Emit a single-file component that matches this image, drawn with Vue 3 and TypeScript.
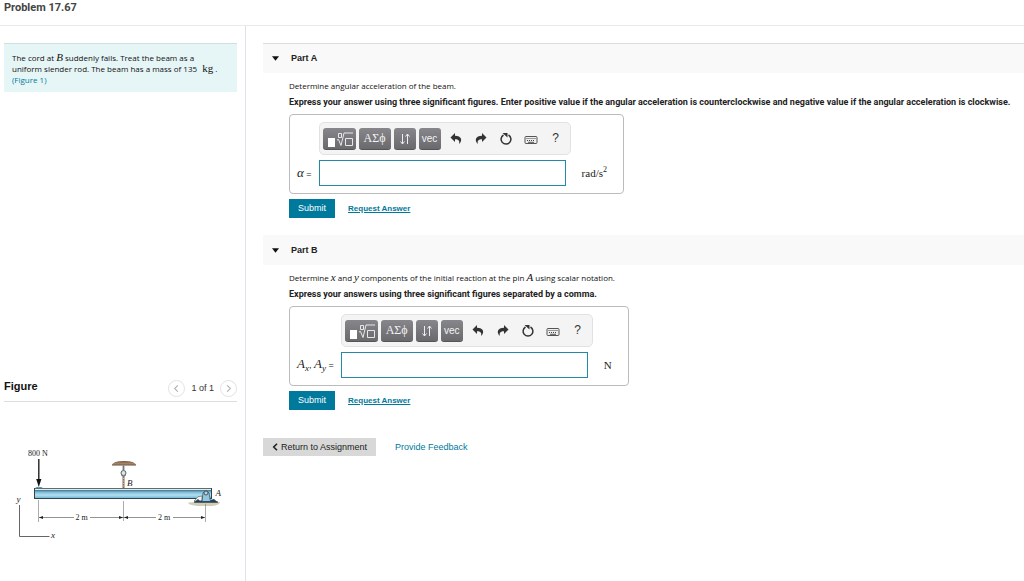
<script setup lang="ts">
import { reactive } from 'vue'

interface Segment { text: string; math?: boolean }
interface Symbol { name: string; sub?: string; after?: string }
interface Part {
  id: string
  title: string
  prompt: Segment[]
  instruction: string
  symbols: Symbol[]
  unit: string
  power?: string
  answer: string
  open: boolean
}

const parts = reactive<Part[]>([
  {
    id: 'a',
    title: 'Part A',
    prompt: [{ text: 'Determine angular acceleration of the beam.' }],
    instruction:
      'Express your answer using three significant figures. Enter positive value if the angular acceleration is counterclockwise and negative value if the angular acceleration is clockwise.',
    symbols: [{ name: 'α' }],
    unit: 'rad/s',
    power: '2',
    answer: '',
    open: true,
  },
  {
    id: 'b',
    title: 'Part B',
    prompt: [
      { text: 'Determine ' },
      { text: 'x', math: true },
      { text: ' and ' },
      { text: 'y', math: true },
      { text: ' components of the initial reaction at the pin ' },
      { text: 'A', math: true },
      { text: ' using scalar notation.' },
    ],
    instruction: 'Express your answers using three significant figures separated by a comma.',
    symbols: [
      { name: 'A', sub: 'x', after: ', ' },
      { name: 'A', sub: 'y' },
    ],
    unit: 'N',
    answer: '',
    open: true,
  },
])
</script>

<template>
  <div class="page">
    <header class="top"><h1>Problem 17.67</h1></header>
    <div class="columns">
      <aside class="side">
        <section class="intro">
          <p class="statement">
            <span>The cord at </span><i class="math">B</i><span> suddenly fails. Treat the beam as a uniform slender rod. The beam has a
            mass of 135 </span><span class="mass"><span class="math kg">kg</span> .</span> <a href="#figure">(Figure 1)</a>
          </p>
        </section>
        <section id="figure">
          <div class="figure-head">
            <h2>Figure</h2>
            <nav class="pager">
              <button type="button" aria-label="Previous figure">
                <svg viewBox="0 0 17 17"><path d="M10 5 6.5 8.5 10 12" /></svg>
              </button>
              <span>1 of 1</span>
              <button type="button" aria-label="Next figure">
                <svg viewBox="0 0 17 17"><path d="M7 5l3.5 3.5L7 12" /></svg>
              </button>
            </nav>
          </div>
          <svg class="drawing" viewBox="4 440 233 110" role="img" aria-label="Beam supported by a cord at B and a pin at A">
            <defs>
              <linearGradient id="steel" x1="0" y1="0" x2="0" y2="1">
                <stop offset="0" stop-color="#3e91b9" />
                <stop offset=".3" stop-color="#6fb3d3" />
                <stop offset=".65" stop-color="#b5e0ef" />
                <stop offset="1" stop-color="#69b2d0" />
              </linearGradient>
              <linearGradient id="ceiling" x1="0" y1="0" x2="0" y2="1">
                <stop offset="0" stop-color="#76523a" />
                <stop offset="1" stop-color="#bba184" />
              </linearGradient>
            </defs>
            <text x="28" y="456" font-size="8">800 N</text>
            <path d="M38.800 459v21" stroke="#222" stroke-width="1.400" />
            <path d="M36.200 479h5.200l-2.600 8z" fill="#111" />
            <path d="M112 465q1-4 12-4t12 4z" fill="url(#ceiling)" />
            <path d="M112 465h24" stroke="#654936" />
            <path d="M123.500 465.500v5" stroke="#777" stroke-width="1.800" />
            <circle cx="123.500" cy="473" r="2.500" fill="#dce5e8" stroke="#566" />
            <path d="M121.500 475.500q2 2 4 0" fill="none" stroke="#555" />
            <path d="M123.500 477v11" stroke="#8d6c55" stroke-width="2" />
            <path d="M123.500 478v9" stroke="#d0b8a4" stroke-width="1" stroke-dasharray="1 1.500" />
            <text x="127" y="486" font-size="9" font-style="italic">B</text>
            <path d="M188 503q1-1 14-1h18q0 3-8 4h-14q-9-1-10-3z" fill="#d2ccb9" />
            <rect x="34.500" y="488.500" width="177" height="10" fill="url(#steel)" stroke="#31434c" />
            <path d="M35 489.500h176" stroke="#e3ece9" stroke-width="1.500" />
            <path d="M35 490.700h176" stroke="#32596b" stroke-width=".7" />
            <path d="M35.500 488q3-1.500 7 0" fill="none" stroke="#478aa6" />
            <path d="M196 499q1-3 6-3v5h-8z" fill="#f3f4f2" stroke="#555" stroke-width=".6" />
            <path d="M194 502.500 198 499l2 2 3-1h7l4-1 4 3.500z" fill="#29475b" />
            <path d="M202 501.500 203 493q3-4 6 0l1.500 8.500z" fill="#91c6de" stroke="#345b6e" stroke-width=".8" />
            <circle cx="206" cy="493" r="2" fill="#bbd3dd" stroke="#3d4b54" stroke-width=".9" />
            <path d="M194 502h24" stroke="#233a49" />
            <text x="215.500" y="496" font-size="9" font-style="italic">A</text>
            <path d="M38.500 500v22M123.500 501v20M205.500 504v18" fill="none" stroke="#888" stroke-width=".7" />
            <path d="M39 517.500h35M90 517.500h66M173 517.500h32" stroke="#777" stroke-width=".8" />
            <path d="m39 517.500 4-1.500v3zM123 517.500l-4-1.500v3zM124 517.500l4-1.500v3zM205 517.500l-4-1.500v3z" fill="#222" />
            <text x="75.500" y="520" font-size="8">2 m</text>
            <text x="158" y="520" font-size="8">2 m</text>
            <path d="M19.500 505v31.500h30" fill="none" stroke="#666" />
            <text x="16.500" y="502" font-size="9" font-style="italic">y</text>
            <text x="51" y="538" font-size="9" font-style="italic">x</text>
          </svg>
        </section>
      </aside>

      <main class="work">
        <section v-for="part in parts" :key="part.id" class="part">
          <h2 class="part-head">
            <button type="button" :aria-expanded="part.open" @click="part.open = !part.open">
              <svg viewBox="0 0 8 5"><path d="M0 0h8L4 5z" /></svg>{{ part.title }}
            </button>
          </h2>
          <div v-if="part.open" class="part-body">
            <p class="prompt"><span v-for="(seg, i) in part.prompt" :key="i" :class="{ math: seg.math, variable: seg.math }">{{ seg.text }}</span></p>
            <p class="instruction">{{ part.instruction }}</p>
            <form @submit.prevent>
              <div class="answer">
                <div class="tools" role="toolbar" aria-label="Equation tools">
                  <button type="button" class="key template" aria-label="Templates">
                    <svg viewBox="0 0 33 22">
                      <path d="M5 10h7v9H5z" fill="#fff" />
                      <g fill="none" stroke="#e8e8e8">
                        <path d="M15.500 5.500h3v4h-3zM14 12l1.500-.5 2.500 6 3-12.500h9" />
                        <path d="M22.500 10.500h7v7h-7z" />
                      </g>
                    </svg>
                  </button>
                  <button type="button" class="key greek">ΑΣϕ</button>
                  <button type="button" class="key" aria-label="Subscript and superscript">
                    <svg viewBox="0 0 22 22"><path d="M8.500 6v10M6.500 13.500l2 2.500 2-2.500M13.500 16V6M11.500 8.500l2-2.500 2 2.500" fill="none" stroke="#eee" /></svg>
                  </button>
                  <button type="button" class="key vec">vec</button>
                  <div class="history">
                    <button type="button" class="plain" aria-label="Undo">
                      <svg viewBox="0 0 16 16"><path d="M7 2 2.500 6.500 7 11V8.300c3.500 0 5 1.500 4 4.700 4-3.500 2.500-8.300-4-8.300z" /></svg>
                    </button>
                    <button type="button" class="plain" aria-label="Redo">
                      <svg viewBox="0 0 16 16"><path d="m9 2 4.500 4.500L9 11V8.300c-3.500 0-5 1.500-4 4.700C1 9.500 2.500 4.700 9 4.700z" /></svg>
                    </button>
                    <button type="button" class="plain" aria-label="Reset">
                      <svg viewBox="0 0 16 16"><path d="M10.500 4a4.900 4.900 0 1 1-5 0" fill="none" stroke="#333" stroke-width="1.500" /><path d="M4.500 2h5v4.500z" /></svg>
                    </button>
                    <button type="button" class="plain" aria-label="Keyboard shortcuts">
                      <svg viewBox="0 0 16 16">
                        <rect x="2" y="5.500" width="12" height="7" rx="1" fill="#eee" stroke="#555" />
                        <path d="M3.500 7.500h9M4 9.500h8" stroke="#444" stroke-dasharray="1 1" />
                        <path d="M5 11.300h6" stroke="#555" />
                      </svg>
                    </button>
                    <button type="button" class="plain help" aria-label="Help">?</button>
                  </div>
                </div>
                <label :for="'answer-' + part.id"><template v-for="(s, i) in part.symbols" :key="i"><i class="math">{{ s.name }}</i><sub v-if="s.sub">{{ s.sub }}</sub>{{ s.after }}</template> =</label>
                <input :id="'answer-' + part.id" v-model="part.answer" type="text" autocomplete="off" />
                <span class="unit">{{ part.unit }}<sup v-if="part.power">{{ part.power }}</sup></span>
              </div>
              <div class="actions">
                <button type="submit" class="submit">Submit</button>
                <a href="#request">Request Answer</a>
              </div>
            </form>
          </div>
        </section>
        <footer class="bottom">
          <button type="button" class="return">
            <svg viewBox="0 0 6 8"><path d="M5 .7 1.700 4 5 7.300" /></svg>Return to Assignment
          </button>
          <a href="#feedback">Provide Feedback</a>
        </footer>
      </main>
    </div>
  </div>
</template>

<style>
body { background: #fff; }
</style>

<style scoped>
* { box-sizing: border-box; }
.page {
  font: 9px/11px "Liberation Sans", Arial, sans-serif;
  color: #222;
  min-height: 100vh;
  display: flex;
  flex-direction: column;
}
h1, h2, p { margin: 0; }
a { color: #007a9c; text-decoration: none; }
button { font: inherit; color: inherit; border: 0; padding: 0; background: none; cursor: pointer; }
svg { display: block; }
.instruction, h1 { font-family: Roboto, "Liberation Sans", sans-serif; }
.statement, .prompt { font-family: "Open Sans", "Liberation Sans", sans-serif; font-size: 8px; color: #111; }
.math, .unit { font-family: "Liberation Serif", "Times New Roman", serif; font-size: 11px; }
.top { height: 26px; border-bottom: 1px solid #eaeaea; padding: 1px 4px; }
h1 { font-size: 11px; line-height: 13px; color: #444; }
.columns { flex: 1; display: grid; grid-template-columns: 246px minmax(0, 1fr); }
.side { border-right: 1px solid #dce3ea; padding: 17px 8px 0 4px; }
.intro { min-height: 329px; }
.statement { background: #e6f6f7; border-top: 1px solid #cfe0e1; padding: 8px 14px 7px 8px; }
.statement .math { line-height: 9px; }
.mass { white-space: nowrap; }
.kg { margin-left: 3px; }
.figure-head {
  display: flex; justify-content: space-between; align-items: center;
  height: 30px; border-bottom: 1px solid #ddd;
}
.figure-head h2 { font-size: 11px; line-height: 13px; color: #111; }
.pager { display: flex; align-items: center; gap: 6px; padding-top: 3px; color: #333; }
.pager button { width: 17px; height: 17px; border: 1px solid #e2e2e2; border-radius: 50%; }
.pager svg { width: 15px; height: 15px; fill: none; stroke: #aaa; stroke-width: 1.2; }
.drawing { width: 100%; margin-top: 38px; font-family: "Liberation Serif", serif; fill: #222; }

.work { padding: 17px 0 20px 17px; }
.part { min-height: 192px; }
.part-head { background: #f9f9f9; height: 30px; display: flex; }
.part:first-child .part-head { border-top: 1px solid #ddd; }
.part-head button { display: flex; align-items: center; gap: 12px; padding: 0 9px; font-size: 9px; font-weight: bold; }
.part-head svg { width: 7px; height: 5px; fill: #111; }
.part-body { padding: 7px 0 0 26px; }
.prompt, .instruction { line-height: 12px; }
.prompt .math { line-height: 9px; }
.variable { font-style: italic; }
.instruction { margin-top: 4px; font-weight: bold; }
.answer {
  display: inline-grid;
  grid-template-columns: auto 247px auto;
  align-items: center;
  row-gap: 5px;
  margin-top: 6px;
  padding: 7px 16px 7px 7px;
  border: 1px solid #bbb;
  border-radius: 4px;
  vertical-align: top;
}
.tools {
  grid-column: 2 / span 2;
  justify-self: start;
  display: flex;
  align-items: center;
  gap: 3px;
  height: 33px;
  padding: 0 3px;
  background: #f4f4f4;
  border: 1px solid #e2e2e2;
  border-radius: 5px;
}
.key {
  width: 22px; height: 22px; border-radius: 3px;
  color: #f4f4f4; background: linear-gradient(#87878b, #6a6a6e);
  border-bottom: 1px solid #555;
}
.template { width: 33px; }
.greek { width: 32px; font-family: "Liberation Serif", serif; font-size: 12px; }
.vec { font-size: 10px; }
.history { display: flex; gap: 3px; padding-left: 1px; }
.plain { width: 22px; height: 22px; display: grid; place-items: center; color: #333; }
.plain svg { width: 16px; height: 16px; fill: #333; }
.help { font-size: 12px; }
.answer label { padding-right: 7px; white-space: pre; }
.answer label .math { font-size: 13px; }
.answer sub { font: italic 9px/8px "Liberation Serif", serif; }
.answer input { height: 26px; width: 100%; border: 1px solid #2389a8; padding: 2px 5px; font: inherit; background: #fff; }
.unit { padding-left: 16px; line-height: 12px; }
.unit sup { font-size: 8px; line-height: 0; }
.actions { display: flex; align-items: center; gap: 13px; margin-top: 5px; }
.submit { background: #007a9c; color: #fff; height: 19px; padding: 0 9px; }
.actions a { font-size: 8px; font-weight: bold; text-decoration: underline; }
.bottom { display: flex; align-items: center; gap: 19px; margin-top: 11px; }
.return { display: flex; align-items: center; gap: 3px; height: 18px; padding: 0 9px; background: #d8d8d8; }
.return svg { width: 6px; height: 8px; fill: none; stroke: #222; stroke-width: 1.6; }
</style>
